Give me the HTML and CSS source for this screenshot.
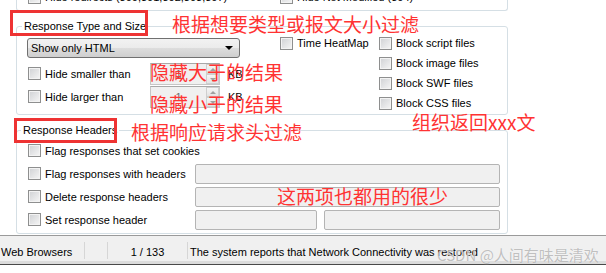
FILE: index.html
```html
<!DOCTYPE html>
<html>
<head>
<meta charset="utf-8">
<link rel="stylesheet" href="styles.css">
</head>
<body>
<div class="screen">
  <div class="group group-top">
    <div class="top-row">
      <label class="opt"><span class="cb"></span>Hide redirects (300,301,302,303,307)</label>
      <label class="opt"><span class="cb"></span>Hide Not Modified (304)</label>
    </div>
  </div>

  <fieldset class="group g-type">
    <legend>Response Type and Size</legend>
    <div class="type-grid">
      <div class="col-left">
        <div class="select">Show only HTML<span class="arrow"></span></div>
        <div class="size-row first">
          <label class="opt"><span class="cb"></span>Hide smaller than</label>
          <div class="spin"><span class="val">1</span><span class="btns"><span class="up"></span><span class="down"></span></span></div>
          <span class="kb">KB</span>
        </div>
        <div class="size-row">
          <label class="opt"><span class="cb"></span>Hide larger than</label>
          <div class="spin"><span class="val">1</span><span class="btns"><span class="up"></span><span class="down"></span></span></div>
          <span class="kb">KB</span>
        </div>
      </div>
      <div class="col-mid">
        <div class="rrow"><label class="opt"><span class="cb"></span>Time HeatMap</label></div>
      </div>
      <div class="col-right">
        <div class="rrow"><label class="opt"><span class="cb"></span>Block script files</label></div>
        <div class="rrow"><label class="opt"><span class="cb"></span>Block image files</label></div>
        <div class="rrow"><label class="opt"><span class="cb"></span>Block SWF files</label></div>
        <div class="rrow"><label class="opt"><span class="cb"></span>Block CSS files</label></div>
      </div>
    </div>
  </fieldset>

  <fieldset class="group g-head">
    <legend>Response Headers</legend>
    <div class="hrow"><label class="opt"><span class="cb"></span>Flag responses that set cookies</label></div>
    <div class="hrow"><label class="opt"><span class="cb"></span>Flag responses with headers</label><span class="tb full"></span></div>
    <div class="hrow"><label class="opt"><span class="cb"></span>Delete response headers</label><span class="tb full"></span></div>
    <div class="hrow"><label class="opt"><span class="cb"></span>Set response header</label><span class="tb a"></span><span class="tb b"></span></div>
  </fieldset>

  <div class="status">
    <div class="cell c1">Web Browsers</div>
    <div class="cell c2"></div>
    <div class="cell c3">1 / 133</div>
    <div class="cell c4">The system reports that Network Connectivity was restored</div>
  </div>
  <div class="strip"></div>

  <div class="redbox rb1"></div>
  <div class="redbox rb2"></div>
  <div class="note n1">根据想要类型或报文大小过滤</div>
  <div class="note n2">隐藏大于的结果</div>
  <div class="note n3">隐藏小于的结果</div>
  <div class="note n4">根据响应请求头过滤</div>
  <div class="note n5">组织返回xxx文</div>
  <div class="note n6">这两项也都用的很少</div>
  <div class="watermark">CSDN @人间有味是清欢</div>
</div>
</body>
</html>
```

FILE: styles.css
```css
body {
  margin: 0;
  background: #fff;
  font-family: "Liberation Sans", Arial, sans-serif;
  font-size: 11px;
  color: #000;
}

.screen {
  position: relative;
  width: 606px;
  height: 273px;
  overflow: hidden;
  display: flow-root;
}

.group {
  box-sizing: border-box;
  width: 492px;
  margin-left: 16px;
  border: 1px solid #d5dfe5;
  border-radius: 3px;
}

.group-top {
  border-top: none;
  border-radius: 0 0 3px 3px;
  margin-top: -13px;
  padding: 0 0 3px 11px;
}

.top-row {
  display: grid;
  grid-template-columns: 252px 1fr;
  height: 20px;
  align-items: center;
}

.opt {
  display: flex;
  align-items: center;
  gap: 4px;
  white-space: nowrap;
}

.cb {
  flex: none;
  width: 13px;
  height: 13px;
  box-sizing: border-box;
  border: 1px solid #8e8f8f;
  background: linear-gradient(135deg, #cfd1d4, #f6f6f6);
  box-shadow: inset 0 0 0 1px #f3f3f3;
}

fieldset.group {
  margin: 9px 0 0 16px;
  min-width: 0;
}

legend {
  padding: 0 2px;
  line-height: 13px;
  font-size: 11px;
}

.g-type {
  padding: 0 6px 1px 10px;
}

.g-type legend {
  margin-left: -5px;
}

.type-grid {
  display: grid;
  grid-template-columns: 253px 99px 1fr;
}

.col-left {
  display: flex;
  flex-direction: column;
}

.select {
  position: relative;
  margin-top: 5px;
  width: 213px;
  height: 20px;
  box-sizing: border-box;
  border: 1px solid #707070;
  border-radius: 3px;
  background: linear-gradient(#f2f2f2, #ebebeb 50%, #dddddd 50%, #cfcfcf);
  padding-left: 3px;
  line-height: 18px;
}

.arrow {
  position: absolute;
  right: 6px;
  top: 7px;
  width: 0;
  height: 0;
  border-left: 4px solid transparent;
  border-right: 4px solid transparent;
  border-top: 4px solid #000;
}

.size-row {
  display: flex;
  align-items: center;
  height: 23px;
}

.size-row.first {
  margin-top: 4px;
}

.size-row .opt {
  width: 122px;
  margin-left: 1px;
}

.spin {
  display: flex;
  width: 70px;
  height: 22px;
  box-sizing: border-box;
  border: 1px solid #c6c6c6;
  border-top-color: #a8a8a8;
  background: #f0f0f0;
}

.spin .val {
  flex: 1;
  text-align: center;
  line-height: 20px;
  color: #6d6d6d;
}

.spin .btns {
  width: 13px;
  display: flex;
  flex-direction: column;
}

.spin .btns span {
  position: relative;
  flex: 1;
  border: 1px solid #cfcfcf;
  background: linear-gradient(#f6f6f6, #e3e3e3);
}

.spin .btns .up::after,
.spin .btns .down::after {
  content: "";
  position: absolute;
  left: 3px;
  top: 3px;
  border-left: 3px solid transparent;
  border-right: 3px solid transparent;
}

.spin .btns .up::after {
  border-bottom: 3px solid #a0a0a0;
}

.spin .btns .down::after {
  border-top: 3px solid #a0a0a0;
}

.kb {
  margin-left: 8px;
}

.rrow {
  height: 20px;
  display: flex;
  align-items: center;
}

.g-head {
  padding: 2px 6px 2px 11px;
}

.g-head legend {
  margin-left: -7px;
}

.hrow {
  height: 23px;
  display: flex;
  align-items: center;
}

.hrow .opt {
  width: 167px;
}

.tb {
  height: 20px;
  box-sizing: border-box;
  border: 1px solid #b4b4b4;
  border-radius: 2px;
  background: #f0f0f0;
}

.tb.full { width: 305px; }
.tb.a { width: 122px; }
.tb.b { width: 176px; margin-left: 7px; }

.status {
  margin-top: 1px;
  height: 26px;
  box-sizing: border-box;
  border-top: 1px solid #9a9a9a;
  background: #f0f0f0;
  padding-top: 6px;
  display: flex;
  align-items: flex-start;
}

.cell {
  height: 17px;
  box-sizing: border-box;
  padding-top: 3px;
  line-height: 14px;
  white-space: nowrap;
}

.c1 { width: 85px; border-right: 1px solid #d6d6d6; padding-left: 1px; }
.c2 { width: 23px; border-right: 1px solid #d6d6d6; }
.c3 { width: 80px; border-right: 1px solid #d6d6d6; text-align: center; }
.c4 { padding-left: 2px; }

.strip {
  height: 12px;
  background: linear-gradient(#dcdcdc 0 3px, #4a4a4a 3px 4px, #ffffff 4px);
}

.redbox {
  position: absolute;
  box-sizing: border-box;
  border: 3px solid #ee3333;
}

.rb1 { left: 10px; top: 10px; width: 138px; height: 26px; }
.rb2 { left: 14px; top: 118px; width: 103px; height: 25px; }

.note {
  position: absolute;
  font-family: "Noto Sans CJK SC", "Liberation Sans", sans-serif;
  font-size: 19px;
  line-height: 19px;
  color: #ff3333;
  white-space: nowrap;
}

.n1 { left: 172px; top: 14px; }
.n2 { left: 150px; top: 62px; }
.n3 { left: 150px; top: 94px; }
.n4 { left: 131px; top: 122px; }
.n5 { left: 412px; top: 112px; }
.n6 { left: 277px; top: 186px; }

.watermark {
  position: absolute;
  left: 437px;
  top: 246px;
  font-family: "Noto Sans CJK SC", "Liberation Sans", sans-serif;
  font-size: 15px;
  line-height: 17px;
  color: rgba(140, 140, 140, 0.55);
  text-shadow: 0 0 1px #fff;
  white-space: nowrap;
}
```
